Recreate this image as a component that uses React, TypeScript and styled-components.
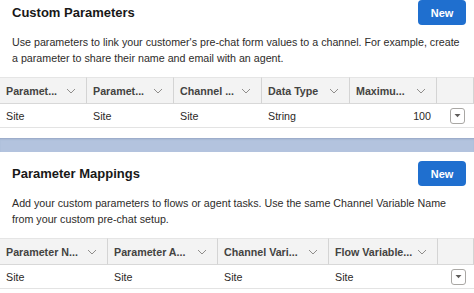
import React from 'react';
import styled, { createGlobalStyle } from 'styled-components';

const GlobalStyle = createGlobalStyle`
  body {
    margin: 0;
    background: #fff;
    font-family: "Liberation Sans", Arial, sans-serif;
    color: #2b2826;
  }
`;

type Column = {
    label: string
    align?: 'left' | 'right'
}

type TableProps = {
    columns: Column[]
    widths: string
    row: string[]
}

const Page = styled.div`
  width: 474px;
  display: flex;
  flex-direction: column;
`;

const Card = styled.section<{ $top: number }>`
  display: flex;
  flex-direction: column;
  padding-top: ${p => p.$top}px;
  padding-bottom: 10px;
`;

const CardHeader = styled.div`
  display: flex;
  align-items: center;
  justify-content: space-between;
  height: 25px;
  padding: 0 8px 0 12px;
`;

const Title = styled.h2`
  margin: 0;
  font-size: 13px;
  font-weight: 700;
  color: #181818;
`;

const NewButton = styled.button`
  width: 48px;
  height: 25px;
  border: none;
  border-radius: 4px;
  background: #1f6fcf;
  color: #fff;
  font-family: inherit;
  font-size: 11px;
  font-weight: 700;
  padding: 0;
`;

const Description = styled.p`
  margin: 9px 0 11px;
  padding: 0 12px;
  font-size: 10.7px;
  line-height: 16px;
  color: #2e2c2a;
`;

const Grid = styled.div<{ $cols: string }>`
  display: grid;
  grid-template-columns: ${p => p.$cols};
`;

const HeadCell = styled.div`
  height: 25px;
  display: flex;
  align-items: center;
  justify-content: space-between;
  padding: 0 10px 0 6px;
  background: #f3f3f3;
  border-top: 1px solid #e5e5e5;
  border-bottom: 1px solid #d8d8d8;
  border-right: 1px solid #d4d4d4;
  font-size: 10.7px;
  font-weight: 700;
  color: #444341;
  white-space: nowrap;
  overflow: hidden;

  &:last-child {
    border-right: none;
  }
`;

const BodyCell = styled.div<{ $align?: string }>`
  height: 23px;
  display: flex;
  align-items: center;
  justify-content: ${p => (p.$align === 'right' ? 'flex-end' : 'flex-start')};
  padding: 0 6px;
  border-bottom: 1px solid #e3e3e3;
  font-size: 10.7px;
  color: #2b2826;
  white-space: nowrap;
`;

const ActionCell = styled(BodyCell)`
  justify-content: center;
  padding: 0 0 0 4px;
`;

const MenuButton = styled.span`
  width: 15px;
  height: 16px;
  box-sizing: border-box;
  border: 1px solid #a9a7a4;
  border-radius: 3px;
  display: flex;
  align-items: center;
  justify-content: center;
  background: #fff;
`;

const Band = styled.div`
  height: 14px;
  background: #b3c3de;
  box-shadow: inset 0 2px 2px -1px rgba(60, 80, 120, 0.25);
`;

const Chevron = () => (
    <svg width="10" height="6" viewBox="0 0 10 6" fill="none">
        <path d="M1 1l4 4 4-4" stroke="#8f8d8b" strokeWidth="1"/>
    </svg>
);

const Caret = () => (
    <svg width="7" height="5" viewBox="0 0 7 5">
        <path d="M0.5 1h6L3.5 4.2z" fill="#5f5d5b"/>
    </svg>
);

const DataTable = ({columns, widths, row}: TableProps) => (
    <Grid $cols={widths}>
        {columns.map((c, i) => (
            <HeadCell key={i}>
                <span>{c.label}</span>
                <Chevron/>
            </HeadCell>
        ))}
        <HeadCell/>
        {row.map((v, i) => (
            <BodyCell key={i} $align={columns[i].align}>{v}</BodyCell>
        ))}
        <ActionCell>
            <MenuButton><Caret/></MenuButton>
        </ActionCell>
    </Grid>
);

const App = () => {
    return (
        <Page>
            <GlobalStyle/>
            <Card $top={0}>
                <CardHeader>
                    <Title>Custom Parameters</Title>
                    <NewButton>New</NewButton>
                </CardHeader>
                <Description>
                    Use parameters to link your customer's pre-chat form values to a channel. For example, create
                    a parameter to share their name and email with an agent.
                </Description>
                <DataTable
                    widths="87px 87px 88px 88px 87px 1fr"
                    columns={[
                        {label: 'Paramet...'},
                        {label: 'Paramet...'},
                        {label: 'Channel ...'},
                        {label: 'Data Type'},
                        {label: 'Maximu...', align: 'right'},
                    ]}
                    row={['Site', 'Site', 'Site', 'String', '100']}
                />
            </Card>
            <Band/>
            <Card $top={9}>
                <CardHeader>
                    <Title>Parameter Mappings</Title>
                    <NewButton>New</NewButton>
                </CardHeader>
                <Description>
                    Add your custom parameters to flows or agent tasks. Use the same Channel Variable Name
                    from your custom pre-chat setup.
                </Description>
                <DataTable
                    widths="108px 110px 111px 109px 1fr"
                    columns={[
                        {label: 'Parameter N...'},
                        {label: 'Parameter A...'},
                        {label: 'Channel Vari...'},
                        {label: 'Flow Variable...'},
                    ]}
                    row={['Site', 'Site', 'Site', 'Site']}
                />
            </Card>
        </Page>
    );
};

export default App;
